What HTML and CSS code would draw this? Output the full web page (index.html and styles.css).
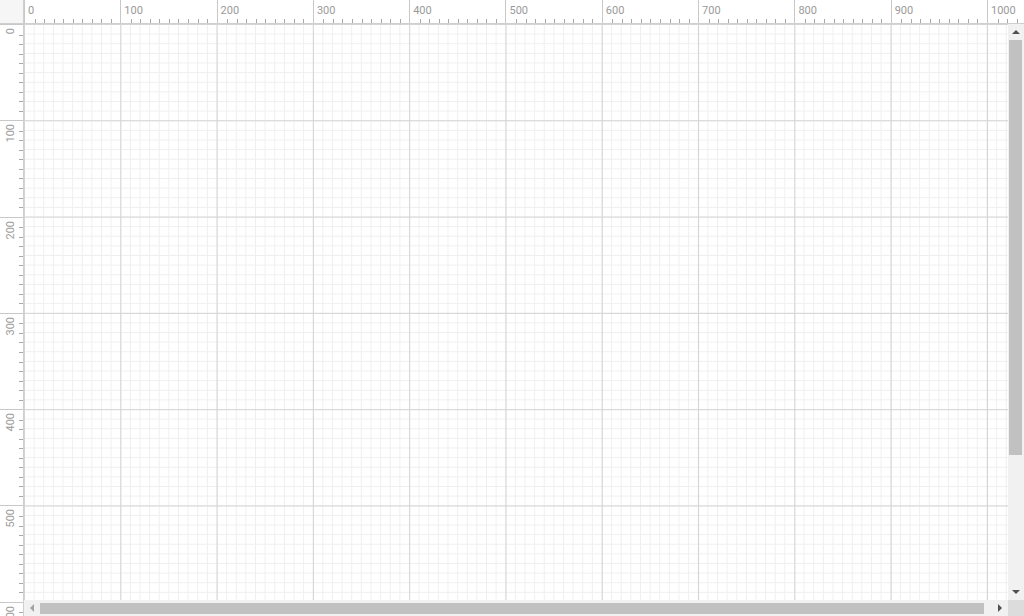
FILE: index.html
```html
<!DOCTYPE html>
<html>
<head>
<meta charset="utf-8">
<link rel="stylesheet" href="styles.css">
</head>
<body>
<div class="app">
  <div class="corner"></div>
  <div class="hruler">
    <div class="hseg"><span>0</span><div class="ticks"><i></i><i></i><i></i><i></i><i></i><i></i><i></i><i></i><i></i><i></i></div></div>
    <div class="hseg"><span>100</span><div class="ticks"><i></i><i></i><i></i><i></i><i></i><i></i><i></i><i></i><i></i><i></i></div></div>
    <div class="hseg"><span>200</span><div class="ticks"><i></i><i></i><i></i><i></i><i></i><i></i><i></i><i></i><i></i><i></i></div></div>
    <div class="hseg"><span>300</span><div class="ticks"><i></i><i></i><i></i><i></i><i></i><i></i><i></i><i></i><i></i><i></i></div></div>
    <div class="hseg"><span>400</span><div class="ticks"><i></i><i></i><i></i><i></i><i></i><i></i><i></i><i></i><i></i><i></i></div></div>
    <div class="hseg"><span>500</span><div class="ticks"><i></i><i></i><i></i><i></i><i></i><i></i><i></i><i></i><i></i><i></i></div></div>
    <div class="hseg"><span>600</span><div class="ticks"><i></i><i></i><i></i><i></i><i></i><i></i><i></i><i></i><i></i><i></i></div></div>
    <div class="hseg"><span>700</span><div class="ticks"><i></i><i></i><i></i><i></i><i></i><i></i><i></i><i></i><i></i><i></i></div></div>
    <div class="hseg"><span>800</span><div class="ticks"><i></i><i></i><i></i><i></i><i></i><i></i><i></i><i></i><i></i><i></i></div></div>
    <div class="hseg"><span>900</span><div class="ticks"><i></i><i></i><i></i><i></i><i></i><i></i><i></i><i></i><i></i><i></i></div></div>
    <div class="hseg"><span>1000</span><div class="ticks"><i></i><i></i><i></i><i></i><i></i><i></i><i></i><i></i><i></i><i></i></div></div>
  </div>
  <div class="vruler">
    <div class="vseg"><span>0</span><div class="ticks"><i></i><i></i><i></i><i></i><i></i><i></i><i></i><i></i><i></i><i></i></div></div>
    <div class="vseg"><span>100</span><div class="ticks"><i></i><i></i><i></i><i></i><i></i><i></i><i></i><i></i><i></i><i></i></div></div>
    <div class="vseg"><span>200</span><div class="ticks"><i></i><i></i><i></i><i></i><i></i><i></i><i></i><i></i><i></i><i></i></div></div>
    <div class="vseg"><span>300</span><div class="ticks"><i></i><i></i><i></i><i></i><i></i><i></i><i></i><i></i><i></i><i></i></div></div>
    <div class="vseg"><span>400</span><div class="ticks"><i></i><i></i><i></i><i></i><i></i><i></i><i></i><i></i><i></i><i></i></div></div>
    <div class="vseg"><span>500</span><div class="ticks"><i></i><i></i><i></i><i></i><i></i><i></i><i></i><i></i><i></i><i></i></div></div>
    <div class="vseg"><span>600</span><div class="ticks"><i></i><i></i><i></i><i></i><i></i><i></i><i></i><i></i><i></i><i></i></div></div>
  </div>
  <div class="view">
    <div class="canvas"></div>
    <div class="vscroll">
      <div class="sbtn"><i class="tri up"></i></div>
      <div class="vtrack"><div class="vthumb"></div></div>
      <div class="sbtn"><i class="tri down"></i></div>
    </div>
    <div class="hscroll">
      <div class="sbtn"><i class="tri left"></i></div>
      <div class="htrack"><div class="hthumb"></div></div>
      <div class="sbtn"><i class="tri right"></i></div>
    </div>
    <div class="scorner"></div>
  </div>
</div>
</body>
</html>
```

FILE: styles.css
```css
* { box-sizing: border-box; }
html, body { margin: 0; padding: 0; background: #fff; }
body { font-family: Roboto, "Liberation Sans", sans-serif; }

.app {
  width: 1024px;
  height: 616px;
  display: grid;
  grid-template-columns: 24px 1000px;
  grid-template-rows: 24px 592px;
  overflow: hidden;
}

.corner {
  background: #f6f6f6;
  border-right: 1px solid #cfcfcf;
  border-bottom: 1px solid #cfcfcf;
}

/* top ruler */
.hruler {
  display: flex;
  overflow: hidden;
  background: #fff;
  border-bottom: 1px solid #cfcfcf;
}
.hseg {
  flex: 0 0 96.3px;
  height: 100%;
  border-left: 1px solid #c8c8c8;
  display: flex;
  flex-direction: column;
  justify-content: space-between;
  font-size: 11px;
  line-height: 11px;
  color: #9a9a9a;
  white-space: nowrap;
}
.hseg span { padding: 5px 0 0 3px; }
.hseg .ticks {
  display: flex;
  height: 4px;
}
.hseg .ticks i {
  flex: 1;
  border-left: 1px solid #a8a8a8;
}
.hseg .ticks i:first-child { border-left-color: transparent; }

/* left ruler */
.vruler {
  display: flex;
  flex-direction: column;
  overflow: hidden;
  background: #fff;
  border-right: 1px solid #cfcfcf;
}
.vseg {
  flex: 0 0 96.3px;
  border-top: 1px solid #c8c8c8;
  display: flex;
  justify-content: space-between;
  font-size: 11px;
  line-height: 11px;
  color: #9a9a9a;
}
.vseg span {
  display: block;
  width: 11px;
  margin: 3px 0 0 5px;
  align-self: flex-start;
  writing-mode: vertical-rl;
  transform: rotate(180deg);
  white-space: nowrap;
}
.vseg .ticks {
  display: flex;
  flex-direction: column;
  width: 4px;
}
.vseg .ticks i {
  flex: 1;
  border-top: 1px solid #a8a8a8;
}
.vseg .ticks i:first-child { border-top-color: transparent; }

/* canvas area */
.view {
  display: grid;
  grid-template-columns: 984px 16px;
  grid-template-rows: 576px 16px;
}

.canvas {
  background-color: #fff;
  background-image:
    linear-gradient(to right, #d4d4d4 1px, transparent 1px),
    linear-gradient(to bottom, #d4d4d4 1px, transparent 1px),
    linear-gradient(to right, #efefef 1px, transparent 1px),
    linear-gradient(to bottom, #efefef 1px, transparent 1px);
  background-size: 96.3px 96.3px, 96.3px 96.3px, 9.63px 9.63px, 9.63px 9.63px;
}

/* scrollbars */
.vscroll {
  display: flex;
  flex-direction: column;
  background: #f1f1f1;
}
.hscroll {
  display: flex;
  background: #f1f1f1;
}
.sbtn {
  flex: 0 0 16px;
  height: 16px;
  width: 16px;
  display: flex;
  align-items: center;
  justify-content: center;
}
.vtrack {
  flex: 1;
  padding: 0 2px 129px 1px;
}
.vthumb {
  height: 100%;
  background: #c1c1c1;
}
.htrack {
  flex: 1;
  padding: 3px 8px 2px 0;
}
.hthumb {
  height: 100%;
  background: #c1c1c1;
}
.scorner { background: #dcdcdc; }

.tri { display: block; width: 0; height: 0; }
.tri.up { border-left: 4px solid transparent; border-right: 4px solid transparent; border-bottom: 4px solid #505050; }
.tri.down { border-left: 4px solid transparent; border-right: 4px solid transparent; border-top: 4px solid #505050; }
.tri.left { border-top: 4px solid transparent; border-bottom: 4px solid transparent; border-right: 4px solid #a3a3a3; }
.tri.right { border-top: 4px solid transparent; border-bottom: 4px solid transparent; border-left: 4px solid #505050; }
```
